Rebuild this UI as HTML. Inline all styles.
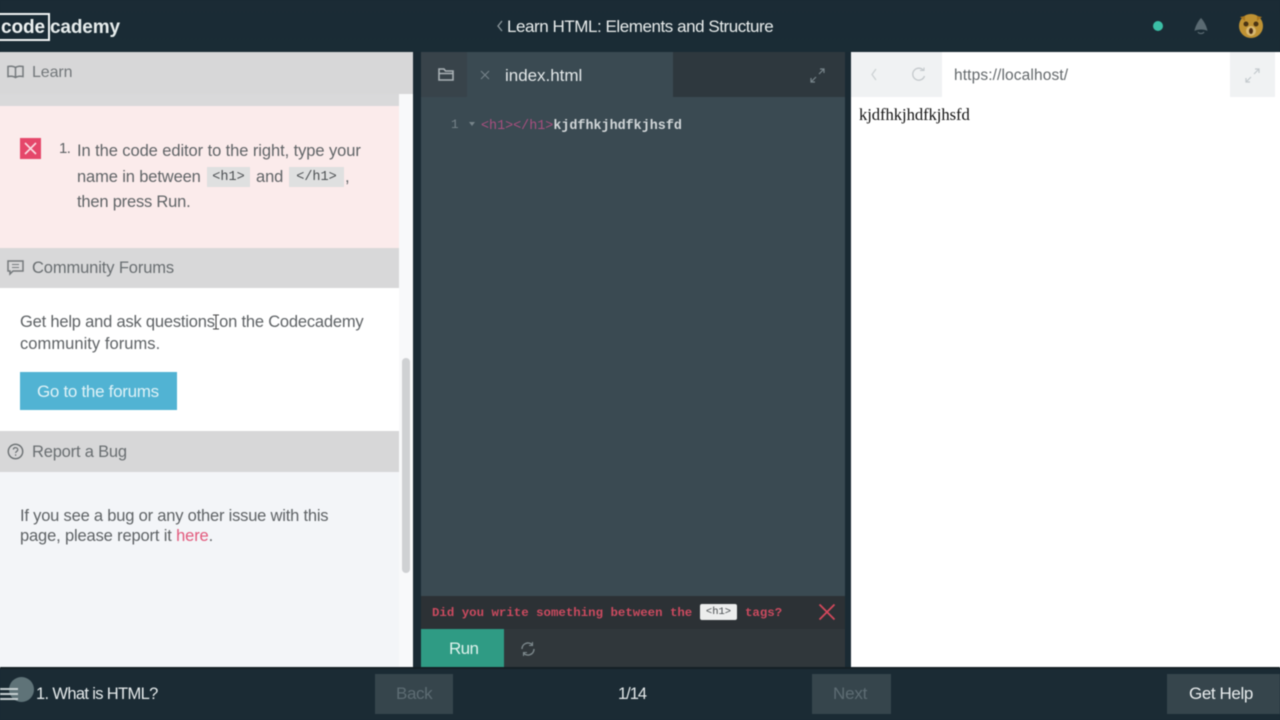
<!DOCTYPE html>
<html lang="en">
<head>
<meta charset="utf-8">
<title>Learn HTML: Elements and Structure</title>
<style>
html,body{margin:0;padding:0;width:1280px;height:720px;overflow:hidden;background:#1a2a33}
body{position:relative;font-family:"Liberation Sans",sans-serif;color:#5a5f63}
#p{position:absolute;left:0;top:0;width:1280px;height:720px;background:#1a2a33;filter:blur(.55px)}
.a{position:absolute}
.t{position:absolute;white-space:nowrap;letter-spacing:-.1px}
.m{font-family:"Liberation Mono",monospace}
.code{position:absolute;background:#dfe0e0;height:20px;font-family:"Liberation Mono",monospace;font-size:13.5px;line-height:21px;text-align:center;color:#4b4f52}
svg{position:absolute;overflow:visible}
</style>
</head>
<body>
<div id="p">
  <!-- top bar -->
  <div class="a" style="left:0;top:0;width:1280px;height:52px;background:linear-gradient(#1b2b35,#1a2c35)"></div>
  <div class="a" style="left:-4px;top:13px;width:50px;height:24px;border:2px solid #f2f5f5"></div>
  <div class="t" style="left:1px;top:16px;font-size:19px;font-weight:bold;color:#eef2f2;line-height:24px;letter-spacing:-.1px">code</div>
  <div class="t" style="left:50px;top:16px;font-size:19px;font-weight:bold;color:#e6ecec;line-height:24px;letter-spacing:-.15px">cademy</div>
  <svg style="left:496px;top:20px" width="8" height="12"><path d="M6 1 L2 6 L6 11" fill="none" stroke="#8b979d" stroke-width="1.3"/></svg>
  <div class="t" style="left:507px;top:16px;font-size:17px;line-height:22px;color:#e8ecec;letter-spacing:-.45px">Learn HTML: Elements and Structure</div>
  <div class="a" style="left:1153px;top:21px;width:10px;height:10px;border-radius:50%;background:#3bbfa6"></div>
  <svg style="left:1193px;top:17px" width="16" height="18"><path d="M8 1 C5 4 2 10 1.5 14 C4 12 12 12 14.5 14 C14 10 11 4 8 1Z" fill="#5a6a72"/><path d="M5 15 C6 17 10 17 11 15" fill="none" stroke="#5a6a72" stroke-width="1.2"/></svg>
  <svg style="left:1238px;top:13px" width="26" height="26"><circle cx="13" cy="13" r="12" fill="#bf9233"/><path d="M2 4 L7 3 L7 8Z M24 4 L19 3 L19 8Z" fill="#a8761e"/><circle cx="8" cy="11" r="2.5" fill="#4a3414"/><circle cx="18" cy="11" r="2.5" fill="#4a3414"/><ellipse cx="13" cy="18" rx="5" ry="5" fill="#d8b870"/><ellipse cx="13" cy="18" rx="2" ry="3" fill="#4a2c14"/></svg>

  <!-- left panel -->
  <div class="a" style="left:-5px;top:52px;width:418px;height:616px;background:#f3f5f8"></div>
  <div class="a" style="left:-5px;top:52px;width:418px;height:42px;background:#d7d7d8"></div>
  <div class="a" style="left:-5px;top:94px;width:404px;height:12px;background:#d9d9da"></div>
  <div class="a" style="left:399px;top:94px;width:14px;height:574px;background:#f8f9fa"></div>
  <svg style="left:7px;top:65px" width="17" height="14" fill="none" stroke="#74797c" stroke-width="1.5"><path d="M8.5 2.5 C6.5 1 3 1 1 1.5 V11.5 C3 11 6.5 11 8.5 12.5 C10.5 11 14 11 16 11.5 V1.5 C14 1 10.5 1 8.5 2.5 V12.5"/></svg>
  <div class="t" style="left:32px;top:63px;font-size:16px;line-height:20px;color:#72777a">Learn</div>

  <div class="a" style="left:-5px;top:106px;width:404px;height:142px;background:#fbebeb"></div>
  <div class="a" style="left:20px;top:138px;width:21px;height:21px;background:#e5476a"></div>
  <svg style="left:20px;top:138px" width="21" height="21"><path d="M5 5 L16 16 M16 5 L5 16" stroke="#fbdce2" stroke-width="1.6"/></svg>
  <div class="t" style="left:59px;top:139px;font-size:15px;line-height:20px;color:#5f6366;letter-spacing:-.6px">1.</div>
  <div class="t" style="left:77px;top:141px;font-size:16.5px;line-height:20px;color:#606467;letter-spacing:-.08px">In the code editor to the right, type your</div>
  <div class="t" style="left:77px;top:167px;font-size:16.5px;line-height:20px;color:#606467;letter-spacing:-.13px">name in between</div>
  <div class="code" style="left:207px;top:167px;width:43px">&lt;h1&gt;</div>
  <div class="t" style="left:256px;top:167px;font-size:16.5px;line-height:20px;color:#606467">and</div>
  <div class="code" style="left:289px;top:167px;width:55px">&lt;/h1&gt;</div>
  <div class="t" style="left:345px;top:167px;font-size:16.5px;line-height:20px;color:#606467">,</div>
  <div class="t" style="left:77px;top:192px;font-size:16.5px;line-height:20px;color:#606467;letter-spacing:-.2px">then press Run.</div>

  <div class="a" style="left:-5px;top:248px;width:404px;height:40px;background:#d8d8d9"></div>
  <svg style="left:7px;top:260px" width="17" height="16" fill="none" stroke="#74797c" stroke-width="1.5"><path d="M1 1 H16 V11 H6 L3 14 V11 H1Z"/><path d="M5 4.5 H12 M5 7.5 H12" stroke-width="1.1"/></svg>
  <div class="t" style="left:32px;top:258px;font-size:16.5px;line-height:20px;color:#696e71;letter-spacing:-.12px">Community Forums</div>

  <div class="a" style="left:-5px;top:288px;width:404px;height:143px;background:#fff"></div>
  <div class="t" style="left:20px;top:312px;font-size:16.5px;line-height:20px;color:#5e6265;letter-spacing:-.2px">Get help and ask questions on the Codecademy</div>
  <div class="t" style="left:20px;top:334px;font-size:16.5px;line-height:20px;color:#5e6265;letter-spacing:.05px">community forums.</div>
  <svg style="left:212px;top:314px" width="8" height="17"><path d="M1 1 H7 M4 1 V15 M1 15 H7" fill="none" stroke="#444" stroke-width="1.1"/></svg>
  <div class="a" style="left:20px;top:372px;width:157px;height:38px;background:#51b3d3"></div>
  <div class="t" style="left:37px;top:382px;font-size:17px;line-height:20px;color:#dff2f7;letter-spacing:-.3px">Go to the forums</div>

  <div class="a" style="left:-5px;top:431px;width:404px;height:41px;background:#d7d7d8"></div>
  <svg style="left:7px;top:443px" width="17" height="17" fill="none" stroke="#696e71" stroke-width="1.4"><circle cx="8.5" cy="8.5" r="7.2"/><path d="M6.3 6.6 C6.5 4 10.8 4 10.8 6.7 C10.8 8.3 8.6 8.4 8.6 10" stroke-width="1.2"/><path d="M8.6 11.3 V12.8" stroke-width="1.2"/></svg>
  <div class="t" style="left:32px;top:442px;font-size:16.5px;line-height:20px;color:#696e71;letter-spacing:-.2px">Report a Bug</div>

  <div class="t" style="left:20px;top:506px;font-size:16.5px;line-height:20px;color:#5e6265;letter-spacing:-.2px">If you see a bug or any other issue with this</div>
  <div class="t" style="left:20px;top:526px;font-size:16.5px;line-height:20px;color:#5e6265;letter-spacing:-.15px">page, please report it <span style="color:#e2597c">here</span>.</div>
  <div class="a" style="left:402px;top:358px;width:8px;height:215px;border-radius:4px;background:#cfd1d3"></div>

  <!-- editor -->
  <div class="a" style="left:421px;top:52px;width:424px;height:616px;background:#3a4a52"></div>
  <div class="a" style="left:673px;top:52px;width:172px;height:45px;background:#2e383e"></div>
  <div class="a" style="left:421px;top:52px;width:46px;height:45px;background:#38434a"></div>
  <svg style="left:438px;top:68px" width="16" height="13"><path d="M1 1 H6 L7.5 3 H15 V12 H1Z M1 5.5 H15" fill="none" stroke="#a9b1b5" stroke-width="1.6"/></svg>
  <svg style="left:480px;top:70px" width="10" height="10"><path d="M1 1 L9 9 M9 1 L1 9" stroke="#76838a" stroke-width="1.1"/></svg>
  <div class="t" style="left:505px;top:66px;font-size:17px;line-height:20px;color:#e3e8e9;letter-spacing:-.02px">index.html</div>
  <svg style="left:810px;top:68px" width="15" height="15" fill="none" stroke="#77848a" stroke-width="1.2"><path d="M9 6 L14 1 M10 1 H14 V5 M6 9 L1 14 M1 10 V14 H5"/></svg>
  <div class="t m" style="left:451px;top:117px;font-size:12.5px;line-height:16px;color:#77848a">1</div>
  <svg style="left:469px;top:122px" width="6" height="5"><path d="M0 0 H6 L3 4Z" fill="#77848a"/></svg>
  <div class="t m" style="left:481px;top:117px;font-size:13.4px;line-height:16px;letter-spacing:0;color:#d2d7d9;font-weight:bold;padding-top:2px"><span style="color:#a84f7f;font-weight:normal">&lt;h1&gt;&lt;/h1&gt;</span>kjdfhkjhdfkjhsfd</div>

  <div class="a" style="left:421px;top:596px;width:424px;height:33px;background:#2c3135"></div>
  <div class="a" style="left:421px;top:629px;width:424px;height:39px;background:#30373b"></div>
  <div class="t m" style="left:432px;top:605px;font-size:12.4px;line-height:16px;font-weight:bold;color:#cb4a5f;letter-spacing:0">Did you write something between the</div>
  <div class="a m" style="left:700px;top:604px;width:37px;height:16px;background:#eceded;border-radius:2px;font-size:10.5px;line-height:16px;text-align:center;color:#454a4d">&lt;h1&gt;</div>
  <div class="t m" style="left:745px;top:605px;font-size:12.4px;line-height:16px;font-weight:bold;color:#cb4a5f;letter-spacing:0">tags?</div>
  <svg style="left:818px;top:603px" width="18" height="18"><path d="M1.5 1.5 L16.5 16.5 M16.5 1.5 L1.5 16.5" stroke="#d3485c" stroke-width="1.8"/></svg>
  <div class="a" style="left:421px;top:629px;width:83px;height:39px;background:#2f9b84"></div>
  <div class="t" style="left:449px;top:639px;font-size:17px;line-height:20px;color:#dff2ec;letter-spacing:-.6px">Run</div>
  <svg style="left:520px;top:641px" width="16" height="16" fill="none" stroke="#7e8a8e" stroke-width="1.4"><path d="M2 8 A6 6 0 0 1 12.5 4 M14 8 A6 6 0 0 1 3.5 12"/><path d="M12.5 1 V4.5 H9 M3.5 15 V11.5 H7" stroke-width="1.1"/></svg>

  <!-- browser -->
  <div class="a" style="left:851px;top:52px;width:434px;height:616px;background:#fff"></div>
  <div class="a" style="left:851px;top:52px;width:91px;height:45px;background:#f0f2f3"></div>
  <div class="a" style="left:1230px;top:52px;width:45px;height:45px;background:#f0f2f3"></div>
  <svg style="left:870px;top:68px" width="8" height="13"><path d="M6 1 L2 6.5 L6 12" fill="none" stroke="#cdd2d4" stroke-width="1.3"/></svg>
  <svg style="left:911px;top:67px" width="15" height="15" fill="none" stroke="#c4c9cc" stroke-width="1.3"><path d="M12.5 3.5 A6 6 0 1 0 13.5 9"/><path d="M9 3.5 H13 V0.5" stroke-width="1.1"/></svg>
  <div class="t" style="left:954px;top:67px;font-size:15.5px;line-height:18px;color:#63686b;letter-spacing:.12px">https://localhost/</div>
  <svg style="left:1245px;top:68px" width="15" height="15" fill="none" stroke="#c4cacd" stroke-width="1.2"><path d="M9 6 L14 1 M10 1 H14 V5 M6 9 L1 14 M1 10 V14 H5"/></svg>
  <div class="t" style="left:859px;top:106px;font-family:'Liberation Serif',serif;font-size:16.6px;line-height:18px;color:#111;letter-spacing:-.05px">kjdfhkjhdfkjhsfd</div>

  <!-- bottom bar -->
  <div class="a" style="left:0;top:668px;width:1280px;height:52px;background:#1b2b34"></div>
  <div class="a" style="left:0;top:667px;width:1280px;height:2px;background:#151f25"></div>
  <div class="a" style="left:9px;top:677px;width:25px;height:25px;border-radius:50%;background:#5f7378"></div>
  <div class="a" style="left:0;top:688px;width:18px;height:2px;background:#c6cfd1"></div>
  <div class="a" style="left:0;top:693px;width:18px;height:2px;background:#c6cfd1"></div>
  <div class="a" style="left:0;top:698px;width:18px;height:2px;background:#c6cfd1"></div>
  <div class="t" style="left:36px;top:684px;font-size:16.5px;line-height:20px;color:#e6ebec;letter-spacing:-.65px">1. What is HTML?</div>
  <div class="a" style="left:375px;top:674px;width:78px;height:40px;background:#36454c"></div>
  <div class="t" style="left:396px;top:684px;font-size:17px;line-height:20px;color:#5d6c73;letter-spacing:-.4px">Back</div>
  <div class="t" style="left:618px;top:684px;font-size:16.5px;line-height:20px;color:#e3e8e9;letter-spacing:-1px">1/14</div>
  <div class="a" style="left:812px;top:674px;width:79px;height:40px;background:#36454c"></div>
  <div class="t" style="left:833px;top:684px;font-size:17px;line-height:20px;color:#5d6c73;letter-spacing:-.2px">Next</div>
  <div class="a" style="left:1167px;top:674px;width:113px;height:40px;background:#36454c"></div>
  <div class="t" style="left:1189px;top:684px;font-size:17px;line-height:20px;color:#e9edee;letter-spacing:-.4px">Get Help</div>
</div>
</body>
</html>
